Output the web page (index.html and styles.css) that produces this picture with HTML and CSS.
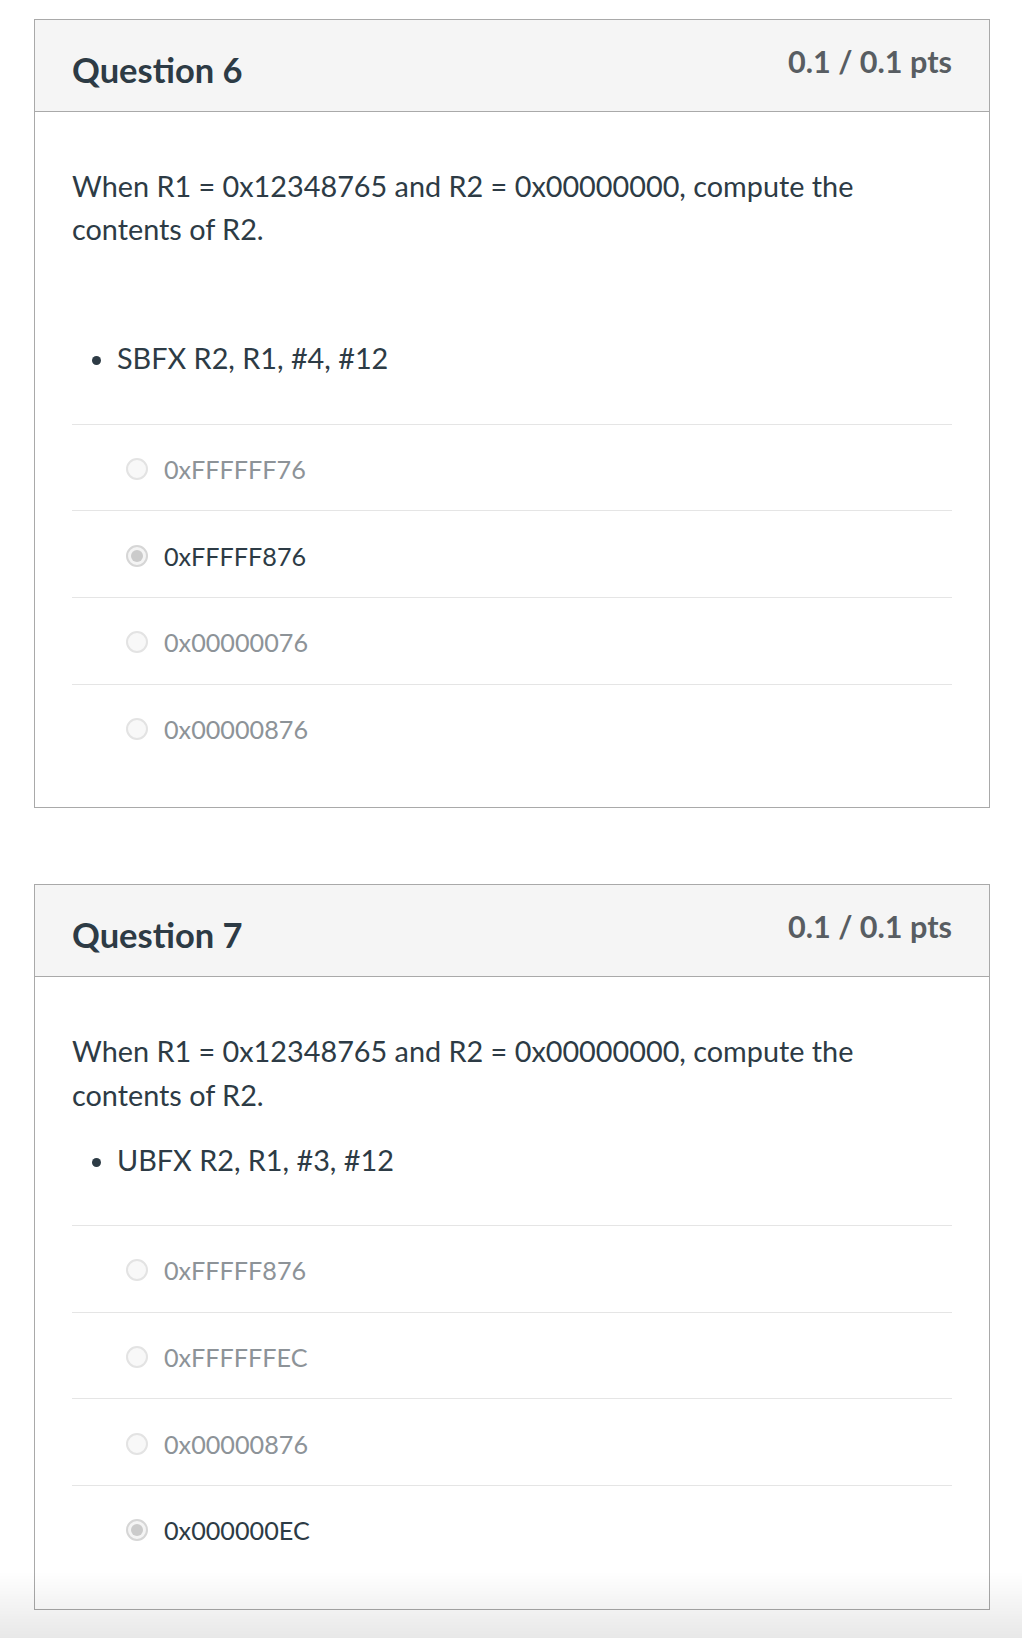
FILE: index.html
```html
<!DOCTYPE html>
<html lang="en">
<head>
<meta charset="utf-8">
<title>Quiz</title>
<link rel="stylesheet" href="styles.css">
</head>
<body>
<main class="quiz">
  <section class="card">
    <header class="card-head">
      <h2 class="q-title">Question 6</h2>
      <div class="q-points">0.1 / 0.1 pts</div>
    </header>
    <div class="card-body">
      <p class="q-text">When R1 = 0x12348765 and R2 = 0x00000000, compute the contents of R2.</p>
      <ul class="q-list q-list-spaced">
        <li>SBFX R2, R1, #4, #12</li>
      </ul>
      <div class="answers">
        <div class="answer"><span class="radio"></span><span class="a-text">0xFFFFFF76</span></div>
        <div class="answer selected"><span class="radio"></span><span class="a-text">0xFFFFF876</span></div>
        <div class="answer"><span class="radio"></span><span class="a-text">0x00000076</span></div>
        <div class="answer"><span class="radio"></span><span class="a-text">0x00000876</span></div>
      </div>
    </div>
  </section>

  <section class="card">
    <header class="card-head">
      <h2 class="q-title">Question 7</h2>
      <div class="q-points">0.1 / 0.1 pts</div>
    </header>
    <div class="card-body">
      <p class="q-text">When R1 = 0x12348765 and R2 = 0x00000000, compute the contents of R2.</p>
      <ul class="q-list">
        <li>UBFX R2, R1, #3, #12</li>
      </ul>
      <div class="answers">
        <div class="answer"><span class="radio"></span><span class="a-text">0xFFFFF876</span></div>
        <div class="answer"><span class="radio"></span><span class="a-text">0xFFFFFFEC</span></div>
        <div class="answer"><span class="radio"></span><span class="a-text">0x00000876</span></div>
        <div class="answer selected"><span class="radio"></span><span class="a-text">0x000000EC</span></div>
      </div>
    </div>
  </section>
</main>
<div class="bottom-fade"></div>
</body>
</html>
```

FILE: styles.css
```css
html, body {
  margin: 0;
  padding: 0;
  background: #ffffff;
}

body {
  font-family: Lato, "Open Sans", "Liberation Sans", sans-serif;
  color: #2d3b45;
  overflow: hidden;
}

.quiz {
  width: 956px;
  margin-left: 34px;
  padding-top: 19px;
  display: flex;
  flex-direction: column;
  gap: 76px;
}

.card {
  border: 1px solid #a9a9a9;
  background: #ffffff;
}

.card-head {
  height: 91px;
  background: #f5f5f5;
  border-bottom: 1px solid #a9a9a9;
  padding: 0 37px;
  display: flex;
  justify-content: space-between;
  align-items: flex-start;
}

.q-title {
  margin: 29px 0 0;
  font-size: 34.5px;
  line-height: 41px;
  font-weight: 700;
  color: #2d3b45;
}

.q-points {
  margin-top: 24px;
  font-size: 30.6px;
  line-height: 36px;
  font-weight: 700;
  color: #585d62;
}

.card-body {
  padding: 53px 37px 37px;
}

.q-text {
  margin: 0;
  font-size: 28.8px;
  line-height: 43.2px;
}

.q-list {
  margin: 22px 0 0;
  padding-left: 45px;
  font-size: 28.8px;
  line-height: 43.2px;
}

.q-list-spaced {
  margin-top: 86px;
}

.answers {
  margin-top: 43px;
}

.answer {
  box-sizing: border-box;
  height: 86.7px;
  padding-top: 3px;
  border-top: 1px solid #e5e5e5;
  display: flex;
  align-items: center;
  font-size: 25.2px;
  color: #8d9398;
}

.answer.selected {
  color: #2d3b45;
}

.radio {
  box-sizing: border-box;
  width: 22px;
  height: 22px;
  margin-left: 54px;
  margin-right: 16px;
  border-radius: 50%;
  border: 2px solid #e3e3e3;
  background: #f8f8f8;
  display: flex;
  align-items: center;
  justify-content: center;
}

.answer.selected .radio {
  border-color: #d6d6d6;
  background: #f4f4f4;
}

.answer.selected .radio::after {
  content: "";
  width: 12px;
  height: 12px;
  border-radius: 50%;
  background: #cbcbcb;
}

.bottom-fade {
  position: fixed;
  left: 0;
  right: 0;
  bottom: 0;
  height: 66px;
  background: linear-gradient(to bottom, rgba(0, 0, 0, 0), rgba(0, 0, 0, 0.09));
  pointer-events: none;
}
```
